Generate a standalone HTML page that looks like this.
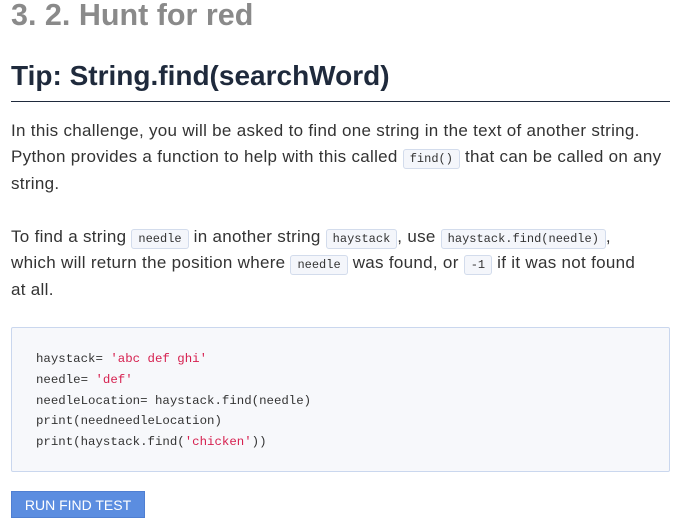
<!DOCTYPE html>
<html><head><style>
body{margin:0;width:681px;height:523px;background:#fff;font-family:"Liberation Sans",sans-serif;position:relative;overflow:hidden}
.a{position:absolute;left:11px;white-space:nowrap}
h2,h1{margin:0;font-weight:bold}
.t{font-size:17px;color:#333;letter-spacing:0.3px}
code{font-family:"Liberation Mono",monospace;font-size:12px;letter-spacing:0;background:#f4f6fb;border:1px solid #d3dcec;border-radius:3px;padding:2px 6px;color:#333}
.code{position:absolute;left:11px;top:327px;width:657px;height:143px;background:#f7f8fb;border:1px solid #cad7ee;border-radius:2px}
.code pre{margin:0;position:absolute;left:24px;top:21px;font-family:"Liberation Mono",monospace;font-size:12.4px;line-height:20.8px;color:#333}
.s{color:#d6204f}
.btn{position:absolute;left:11px;top:491px;width:134px;height:27px;background:#5b8de0;color:#fff;font-size:14px;text-align:center;line-height:27px;border:1px solid #4f7fd2;box-sizing:border-box}
</style></head><body>
<h2 class="a" style="top:-2px;font-size:30.5px;color:#8a8a8a">3. 2. Hunt for red</h2>
<h1 class="a" style="top:60px;font-size:28px;color:#1f2a3c">Tip: String.find(searchWord)</h1>
<div style="position:absolute;left:11px;top:101px;width:659px;height:1px;background:#1f2a3c"></div>
<div class="a t" style="top:121px">In this challenge, you will be asked to find one string in the text of another string.</div>
<div class="a t" style="top:147px">Python provides a function to help with this called <code>find()</code> that can be called on any</div>
<div class="a t" style="top:174px">string.</div>
<div class="a t" style="top:227px">To find a string <code>needle</code> in another string <code>haystack</code>, use <code>haystack.find(needle)</code>,</div>
<div class="a t" style="top:253px">which will return the position where <code>needle</code> was found, or <code>-1</code> if it was not found</div>
<div class="a t" style="top:280px">at all.</div>
<div class="code"><pre>haystack= <span class="s">'abc def ghi'</span>
needle= <span class="s">'def'</span>
needleLocation= haystack.find(needle)
print(needneedleLocation)
print(haystack.find(<span class="s">'chicken'</span>))</pre></div>
<div class="btn">RUN FIND TEST</div>
</body></html>
